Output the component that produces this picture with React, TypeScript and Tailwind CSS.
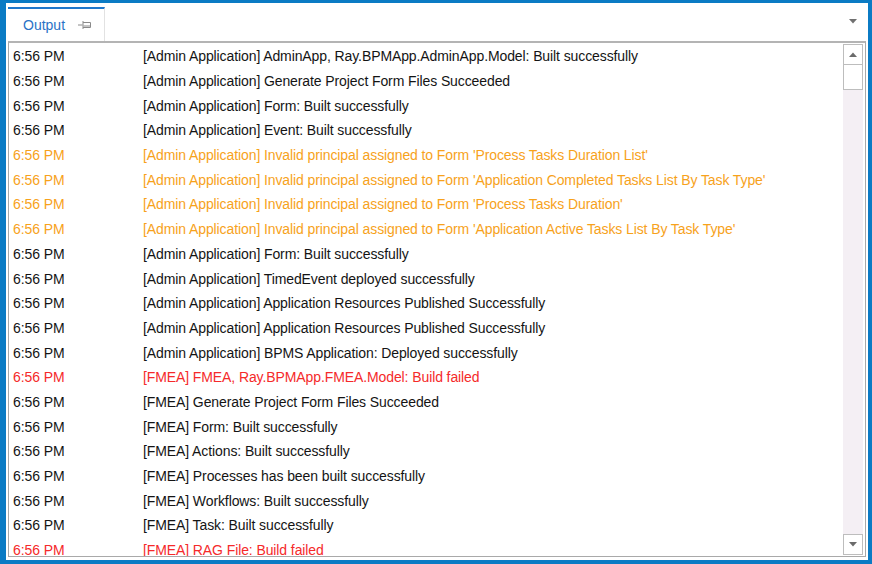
import React from 'react';

type Level = 'info' | 'warn' | 'error';

interface LogLine {
  time: string;
  text: string;
  level: Level;
}

const lines: LogLine[] = [
  { time: '6:56 PM', text: '[Admin Application] AdminApp, Ray.BPMApp.AdminApp.Model: Built successfully', level: 'info' },
  { time: '6:56 PM', text: '[Admin Application] Generate Project Form Files Succeeded', level: 'info' },
  { time: '6:56 PM', text: '[Admin Application] Form: Built successfully', level: 'info' },
  { time: '6:56 PM', text: '[Admin Application] Event: Built successfully', level: 'info' },
  { time: '6:56 PM', text: "[Admin Application] Invalid principal assigned to Form 'Process Tasks Duration List'", level: 'warn' },
  { time: '6:56 PM', text: "[Admin Application] Invalid principal assigned to Form 'Application Completed Tasks List By Task Type'", level: 'warn' },
  { time: '6:56 PM', text: "[Admin Application] Invalid principal assigned to Form 'Process Tasks Duration'", level: 'warn' },
  { time: '6:56 PM', text: "[Admin Application] Invalid principal assigned to Form 'Application Active Tasks List By Task Type'", level: 'warn' },
  { time: '6:56 PM', text: '[Admin Application] Form: Built successfully', level: 'info' },
  { time: '6:56 PM', text: '[Admin Application] TimedEvent deployed successfully', level: 'info' },
  { time: '6:56 PM', text: '[Admin Application] Application Resources Published Successfully', level: 'info' },
  { time: '6:56 PM', text: '[Admin Application] Application Resources Published Successfully', level: 'info' },
  { time: '6:56 PM', text: '[Admin Application] BPMS Application: Deployed successfully', level: 'info' },
  { time: '6:56 PM', text: '[FMEA] FMEA, Ray.BPMApp.FMEA.Model: Build failed', level: 'error' },
  { time: '6:56 PM', text: '[FMEA] Generate Project Form Files Succeeded', level: 'info' },
  { time: '6:56 PM', text: '[FMEA] Form: Built successfully', level: 'info' },
  { time: '6:56 PM', text: '[FMEA] Actions: Built successfully', level: 'info' },
  { time: '6:56 PM', text: '[FMEA] Processes has been built successfully', level: 'info' },
  { time: '6:56 PM', text: '[FMEA] Workflows: Built successfully', level: 'info' },
  { time: '6:56 PM', text: '[FMEA] Task: Built successfully', level: 'info' },
  { time: '6:56 PM', text: '[FMEA] RAG File: Build failed', level: 'error' },
];

const levelColor: Record<Level, string> = {
  info: 'text-[#141414]',
  warn: 'text-[#f7a21b]',
  error: 'text-[#f52a2a]',
};

function PinIcon() {
  return (
    <svg width="14" height="10" viewBox="0 0 14 10" className="text-[#8a8a8a]">
      <path d="M0 5h4.5" stroke="currentColor" strokeWidth="1" />
      <path d="M5 1v8" stroke="currentColor" strokeWidth="1" />
      <path d="M5 2.5h7.5v5h-7.5" fill="none" stroke="currentColor" strokeWidth="1" />
      <path d="M5.5 6h7" stroke="currentColor" strokeWidth="1" />
    </svg>
  );
}

function ScrollButton({ down }: { down?: boolean }) {
  return (
    <div className="h-[21px] w-full border border-[#bdbdbd] bg-white flex items-center justify-center">
      <svg width="8" height="5" viewBox="0 0 8 5">
        <path d={down ? 'M0 0h8L4 4.5z' : 'M0 5h8L4 0.5z'} fill="#6b6b6b" />
      </svg>
    </div>
  );
}

export default function App() {
  return (
    <div className="w-[872px] h-[564px] bg-[#0b7bc4] pl-[6px] pt-[3px] pr-[4px] pb-[4px]" style={{ fontFamily: '"Liberation Sans", Arial, sans-serif' }}>
      <div className="w-full h-full bg-white flex flex-col pl-[2px] pr-[2px] pb-[3px]">
        {/* tab strip */}
        <div className="h-[38px] flex items-end shrink-0">
          <div className="h-[34px] w-[97px] border-t-2 border-[#1f78cc] border-r border-r-[#e2e2e2] flex items-center pl-[15px] gap-[13px]">
            <span className="text-[14px] text-[#2a72c6] leading-none">Output</span>
            <PinIcon />
          </div>
          <div className="flex-1 h-full flex items-center justify-end pr-[9px] pb-[2px]">
            <svg width="8" height="5" viewBox="0 0 8 5">
              <path d="M0 0h8L4 4.5z" fill="#707070" />
            </svg>
          </div>
        </div>

        {/* output list */}
        <div className="flex-1 min-h-0 border border-[#a9a9a9] border-t-2 border-t-[#b4b4b4] flex">
          <div className="flex-1 min-w-0 overflow-hidden pt-[1px]">
            {lines.map((line, i) => (
              <div key={i} className={`h-[24.7px] flex items-center text-[14px] tracking-[-0.1px] leading-none whitespace-nowrap ${levelColor[line.level]}`}>
                <span className="w-[134px] pl-[4px] shrink-0">{line.time}</span>
                <span>{line.text}</span>
              </div>
            ))}
          </div>
          <div className="w-[20px] mr-[2px] my-[1px] flex flex-col bg-[#f4eff4]">
            <ScrollButton />
            <div className="h-[25px] border border-t-0 border-[#bdbdbd] bg-white" />
            <div className="flex-1" />
            <ScrollButton down />
          </div>
        </div>
      </div>
    </div>
  );
}
